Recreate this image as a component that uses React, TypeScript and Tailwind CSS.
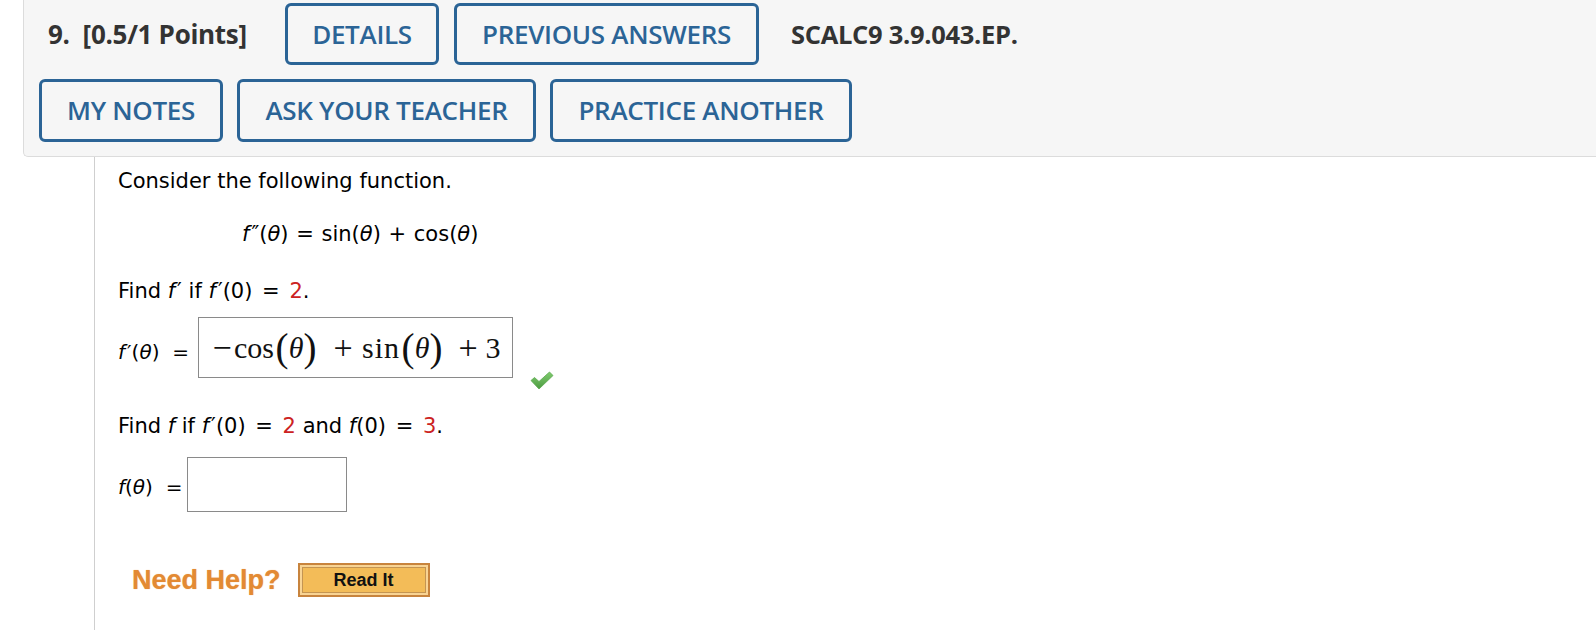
import React from "react";

function Btn({ className, children }: { className: string; children: React.ReactNode }) {
  return (
    <div
      className={
        "flex items-center justify-center border-[3px] border-[#2b6496] rounded-[6px] text-[#2b6496] text-[26px] font-semibold tracking-[-0.3px] " +
        className
      }
    >
      {children}
    </div>
  );
}

function Check() {
  return (
    <svg width="24" height="19" viewBox="0 0 24 19" className="mt-[54px] ml-[17px]">
      <defs>
        <linearGradient id="g" x1="0" y1="0" x2="0" y2="1">
          <stop offset="0" stopColor="#80cc6e" />
          <stop offset="1" stopColor="#4c9a42" />
        </linearGradient>
      </defs>
      <path d="M1 9.5 L4.5 6.5 L9 10.5 L19.5 1 L23 4.5 L9 18 Z" fill="url(#g)" stroke="#5aa84e" strokeWidth="0.8" strokeLinejoin="round" />
    </svg>
  );
}

function P() {
  return <span className="ml-[2px]">′</span>;
}

function Eq() {
  return <span className="mx-[3px]">=</span>;
}

export default function App() {
  return (
    <div className="w-[1596px] h-[630px] bg-white overflow-hidden flex flex-col">
      <div className="ml-[23px] shrink-0 bg-[#f6f6f6] border-l border-b border-[#dcdcdc] rounded-bl-[5px] pl-[15px] pt-[3px] pb-[14px] font-['Open_Sans',sans-serif]">
        <div className="flex items-center pl-[9px]">
          <div className="w-[237px] text-[26px] font-bold text-[#333333] tracking-[-0.3px]">9.&nbsp; [0.5/1 Points]</div>
          <Btn className="w-[154px] h-[62px]">DETAILS</Btn>
          <Btn className="w-[305px] h-[62px] ml-[15px]">PREVIOUS ANSWERS</Btn>
          <div className="ml-[32px] text-[25.5px] font-bold text-[#333333] tracking-[-0.3px]">SCALC9 3.9.043.EP.</div>
        </div>
        <div className="flex items-center gap-[14px] mt-[14px]">
          <Btn className="w-[184px] h-[63px]">MY NOTES</Btn>
          <Btn className="w-[299px] h-[63px]">ASK YOUR TEACHER</Btn>
          <Btn className="w-[302px] h-[63px]">PRACTICE ANOTHER</Btn>
        </div>
      </div>

      <div className="ml-[94px] flex-1 border-l border-[#cfcfcf] pl-[23px] font-['DejaVu_Sans',sans-serif] text-[21px] leading-[24px] text-black">
        <div className="mt-[12px]">Consider the following function.</div>
        <div className="mt-[29px] pl-[124px]">
          <i>f</i>
          <span className="ml-[2px]">″</span>(<i>θ</i>) <span className="mx-[1px]">=</span> sin(<i>θ</i>){" "}
          <span className="mx-[1px]">+</span> cos(<i>θ</i>)
        </div>
        <div className="mt-[33px]">
          Find <i>f</i>
          <P /> if <i>f</i>
          <P />
          (0) <Eq /> <span className="text-[#cc2222]">2</span>.
        </div>

        <div className="mt-[14px] flex items-start">
          <div className="mt-[23px] text-[20px] w-[80px] whitespace-nowrap">
            <i>f</i>
            <P />(<i>θ</i>)&nbsp; =
          </div>
          <div className="w-[315px] h-[61px] border border-[#8a8a8a] flex items-center pl-[13px] font-['Liberation_Serif',serif] text-[30px] leading-none text-[#111]">
            <span className="w-[20px] flex justify-center text-[34px]">−</span>
            <span className="ml-[2px] w-[40px] flex justify-center">cos</span>
            <span className="ml-[2px] w-[12px] flex justify-center text-[39px] font-light">(</span>
            <span className="ml-[1px] w-[14px] flex justify-center italic">θ</span>
            <span className="ml-[1px] w-[12px] flex justify-center text-[39px] font-light">)</span>
            <span className="ml-[16px] w-[22px] flex justify-center text-[34px]">+</span>
            <span className="ml-[7px] w-[40px] flex justify-center tracking-[1px]">sin</span>
            <span className="ml-[1px] w-[12px] flex justify-center text-[39px] font-light">(</span>
            <span className="ml-[1px] w-[14px] flex justify-center italic">θ</span>
            <span className="ml-[1px] w-[12px] flex justify-center text-[39px] font-light">)</span>
            <span className="ml-[15px] w-[22px] flex justify-center text-[34px]">+</span>
            <span className="ml-[4px] w-[20px] flex justify-center">3</span>
          </div>
          <Check />
        </div>

        <div className="mt-[24px]">
          Find <i>f</i> if <i>f</i>
          <P />
          (0) <Eq /> <span className="text-[#cc2222]">2</span> and <i>f</i>(0) <Eq />{" "}
          <span className="text-[#cc2222]">3</span>.
        </div>

        <div className="mt-[19px] flex items-start">
          <div className="mt-[18px] text-[20px] w-[69px] whitespace-nowrap">
            <i>f</i>(<i>θ</i>)&nbsp; =
          </div>
          <div className="w-[160px] h-[55px] border border-[#8a8a8a] bg-white"></div>
        </div>

        <div className="mt-[51px] flex items-center pl-[14px]">
          <div className="font-['Liberation_Sans',Arial,sans-serif] font-bold text-[27px] text-[#e38a33] [text-shadow:0_0_1px_#f0b070]">
            Need Help?
          </div>
          <div className="ml-[17px] w-[132px] h-[34px] border-2 border-[#c8843d] bg-[#f8d494] p-[2px]">
            <div className="w-full h-full border border-[#c49552] bg-[#f3bc58] flex items-center justify-center font-['Liberation_Sans',Arial,sans-serif] font-bold text-[18px] text-[#111]">
              Read It
            </div>
          </div>
        </div>
      </div>
    </div>
  );
}
